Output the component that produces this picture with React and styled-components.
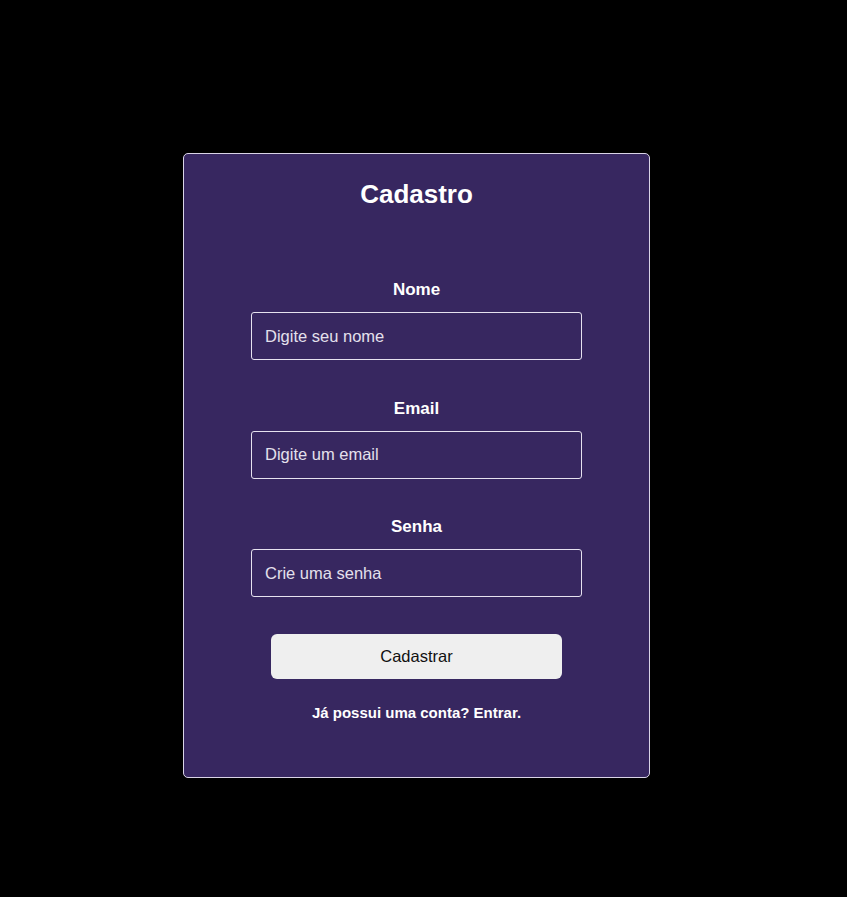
import styled, { createGlobalStyle } from "styled-components"

const GlobalStyle = createGlobalStyle`
  * { box-sizing: border-box; }
  body {
    margin: 0;
    background: #000000;
    font-family: "Liberation Sans", Arial, sans-serif;
  }
`

const Page = styled.div`
  min-height: 897px;
  padding: 153px 0 0 183px;
`

const Card = styled.form`
  width: 467px;
  height: 625px;
  background-color: #372760;
  border: 1px solid #d9d4e6;
  border-radius: 5px;
  padding: 25px 0 0;
  display: flex;
  flex-direction: column;
  align-items: center;
`

const Title = styled.h2`
  margin: 0;
  font-size: 26px;
  line-height: 30px;
  font-weight: bold;
  color: #ffffff;
`

const Fields = styled.div`
  margin-top: 70px;
  display: flex;
  flex-direction: column;
  align-items: center;
  gap: 37.5px;
`

const Field = styled.div`
  display: flex;
  flex-direction: column;
  align-items: center;
  gap: 12px;
`

const Label = styled.label`
  font-size: 17px;
  line-height: 21px;
  font-weight: bold;
  color: #ffffff;
`

const Input = styled.input`
  width: 331px;
  height: 48px;
  padding: 0 13px;
  background: transparent;
  border: 1px solid #e6e2ef;
  border-radius: 3px;
  font-family: inherit;
  font-size: 16.5px;
  color: #ffffff;
  outline: none;

  &::placeholder {
    color: #e4e0ec;
    opacity: 1;
  }
`

const Button = styled.button`
  margin-top: 37px;
  width: 291px;
  height: 45px;
  border: none;
  border-radius: 6px;
  background-color: #efefef;
  color: #111111;
  font-family: inherit;
  font-size: 16.5px;
  cursor: pointer;
`

const LinkText = styled.p`
  margin: 25px 0 0;
  font-size: 15px;
  line-height: 17px;
  font-weight: bold;
  color: #ffffff;
`

export default function App() {
  const campos = [
    { id: "nome", label: "Nome", placeholder: "Digite seu nome", type: "text" },
    { id: "email", label: "Email", placeholder: "Digite um email", type: "email" },
    { id: "senha", label: "Senha", placeholder: "Crie uma senha", type: "password" },
  ]

  return (
    <>
      <GlobalStyle />
      <Page>
        <Card onSubmit={(e) => e.preventDefault()}>
          <Title>Cadastro</Title>
          <Fields>
            {campos.map((c) => (
              <Field key={c.id}>
                <Label htmlFor={c.id}>{c.label}</Label>
                <Input id={c.id} type={c.type} placeholder={c.placeholder} />
              </Field>
            ))}
          </Fields>
          <Button type="submit">Cadastrar</Button>
          <LinkText>Já possui uma conta? Entrar.</LinkText>
        </Card>
      </Page>
    </>
  )
}
